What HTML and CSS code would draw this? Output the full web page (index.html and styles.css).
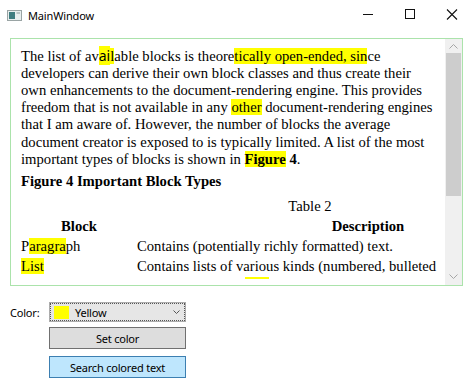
FILE: index.html
```html
<!DOCTYPE html>
<html lang="en">
<head>
  <meta charset="UTF-8" />
  <title>MainWindow</title>
  <link rel="stylesheet" href="styles.css">
</head>
<body>

<div class="titlebar">
  <svg class="app-icon" width="15" height="11" viewBox="0 0 15 11">
    <rect x="0.5" y="0.5" width="14" height="10" fill="#e8eeee" stroke="#9aa4a4"/>
    <rect x="2" y="2" width="6" height="7" fill="#3f7d80"/>
    <rect x="9.5" y="2" width="3.5" height="2" fill="#b8c4c4"/>
  </svg>
  <span class="title">MainWindow</span>
  <div class="caption">
    <svg class="cap-btn" width="42" height="30" viewBox="0 0 42 30"><line x1="18" y1="14.5" x2="28" y2="14.5" stroke="#111" stroke-width="1"/></svg>
    <svg class="cap-btn" width="42" height="30" viewBox="0 0 42 30"><rect x="18.5" y="9.5" width="9" height="9" fill="none" stroke="#111" stroke-width="1"/></svg>
    <svg class="cap-btn" width="42" height="30" viewBox="0 0 42 30"><path d="M18 9.5 L28 19.5 M28 9.5 L18 19.5" stroke="#111" stroke-width="1.1"/></svg>
  </div>
</div>

<div class="content">
  <div class="rtb">
    <div class="doc">
      <p class="para">
        The list of av<span class="hl big">ai</span><span class="hl">l</span>able blocks is theore<span class="hl">tically open-ended, sin</span>ce<br>
        developers can derive their own block classes and thus create their<br>
        own enhancements to the document-rendering engine. This provides<br>
        freedom that is not available in any <span class="hl">other</span> document-rendering engines<br>
        that I am aware of. However, the number of blocks the average<br>
        document creator is exposed to is typically limited. A list of the most<br>
        important types of blocks is shown in <b><span class="hl">Figure</span> 4</b>.
      </p>
      <p class="heading">Figure 4 Important Block Types</p>
      <table class="blocks">
        <tr><td colspan="2" class="caption-cell">Table 2</td></tr>
        <tr><th class="col-block">Block</th><th>Description</th></tr>
        <tr><td>P<span class="hl">aragra</span>ph</td><td>Contains (potentially richly formatted) text.</td></tr>
        <tr><td><span class="hl">List</span></td><td>Contains lists of various kinds (numbered, bulleted</td></tr>
        <tr><td></td><td>and so on), with a <span class="hl">nest</span>ed list.</td></tr>
        <tr><td>Table</td><td>Contains rows and columns of cells.</td></tr>
      </table>
    </div>
    <div class="vscroll">
      <div class="arrow up">
        <svg width="9" height="5" viewBox="0 0 9 5"><polyline points="0.5,4.5 4.5,0.5 8.5,4.5" fill="none" stroke="#a6a6a6"/></svg>
      </div>
      <div class="thumb"></div>
      <div class="track"></div>
      <div class="arrow down">
        <svg width="9" height="5" viewBox="0 0 9 5"><polyline points="0.5,0.5 4.5,4.5 8.5,0.5" fill="none" stroke="#a6a6a6"/></svg>
      </div>
    </div>
  </div>

  <div class="controls">
    <span class="label">Color:</span>
    <div class="combo">
      <span class="swatch"></span>
      <span class="combo-text">Yellow</span>
      <svg class="chev" width="7" height="4" viewBox="0 0 7 4"><polyline points="0.5,0.5 3.5,3.5 6.5,0.5" fill="none" stroke="#555"/></svg>
    </div>
    <span></span>
    <button class="btn">Set color</button>
    <span></span>
    <button class="btn search">Search colored text</button>
  </div>
</div>

</body>
</html>
```

FILE: styles.css
```css
body { margin: 0; background: #fff; font-family: "Noto Sans", sans-serif; width: 474px; height: 386px; overflow: hidden; }

.titlebar { height: 30px; display: flex; align-items: center; }
.app-icon { margin-left: 7px; }
.title { margin-left: 6px; font-size: 11px; letter-spacing: -0.15px; color: #000; }
.caption { margin-left: auto; display: flex; margin-right: 3px; }
.cap-btn { display: block; }

.content { padding: 8px 11px 0 10px; }

.rtb { height: 246px; border: 1px solid #abe3ab; display: flex; }
.doc { flex: 1; overflow: hidden; height: 240px; padding: 0 0 0 10px; margin-right: 4px; font-family: "Liberation Serif", "Times New Roman", serif; font-size: 14.67px; line-height: 17.2px; color: #000; }
.para { margin: 7.5px 0 0 0; white-space: nowrap; }
.heading { margin: 4.9px 0 0 0; font-weight: bold; white-space: nowrap; }
.hl { background: #ffff00; }
.big { font-family: "Noto Sans", sans-serif; font-size: 14px; }

.blocks { border-collapse: collapse; width: 578px; margin-top: 6.8px; }
.blocks td, .blocks th { padding: 1.3px 0; line-height: 17.2px; white-space: nowrap; text-align: left; vertical-align: top; }
.blocks th { text-align: center; font-weight: bold; }
.blocks .caption-cell { text-align: center; }
.col-block { width: 116px; }

.vscroll { width: 17px; background: #f0f0f0; display: flex; flex-direction: column; }
.arrow { display: flex; align-items: center; justify-content: center; }
.arrow.up { height: 14px; }
.arrow.down { height: 17px; }
.thumb { height: 143px; background: #cdcdcd; margin: 0 1px 0 1px; }
.track { flex: 1; }

.controls { display: grid; grid-template-columns: 39px 137px; row-gap: 5px; margin-top: 16px; font-size: 11px; letter-spacing: -0.2px; }
.label { align-self: center; color: #000; }
.combo { height: 20px; box-sizing: border-box; border: 1px solid #acacac; background: #e6e6e6; display: flex; align-items: center; outline: 1px dotted #555; outline-offset: -2px; }
.swatch { width: 15px; height: 13px; background: #ffff00; margin-left: 4px; }
.combo-text { margin-left: 6px; }
.chev { margin-left: auto; margin-right: 5px; }
.btn { height: 22px; font-family: "Noto Sans", sans-serif; font-size: 11px; letter-spacing: -0.2px; background: #dddddd; border: 1px solid #707070; padding: 0; color: #000; }
.btn.search { background: #bee6fd; border-color: #3c7fb1; margin-top: 2px; }
```
